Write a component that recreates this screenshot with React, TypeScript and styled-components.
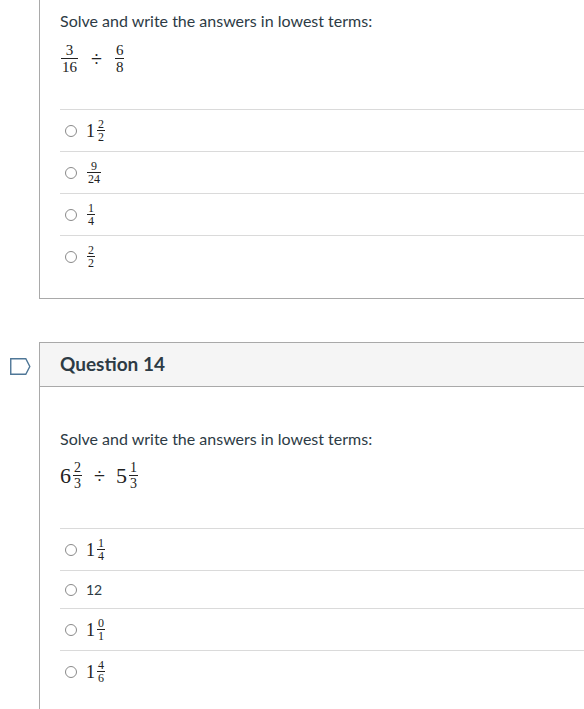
import React from "react";
import styled, { createGlobalStyle } from "styled-components";

const GlobalStyle = createGlobalStyle`
  html, body {
    margin: 0;
    padding: 0;
    background: #fff;
    overflow: hidden;
  }
  body {
    font-family: Lato, "Open Sans", sans-serif;
    color: #2d3b45;
  }
`;

const MATH_FONT = `"Liberation Serif", "DejaVu Serif", "Times New Roman", serif`;

const Page = styled.div`
  display: flex;
  flex-direction: column;
  gap: 43px;
  width: 584px;
`;

const QuestionRow = styled.div`
  display: flex;
  align-items: flex-start;
`;

const Gutter = styled.div`
  width: 39px;
  flex-shrink: 0;
  box-sizing: border-box;
  padding: 16px 0 0 10px;
`;

const Card = styled.section<{ $cut?: boolean }>`
  flex: 1;
  min-width: 0;
  border: 1px solid #a9a9a9;
  border-right: none;
  border-top: ${(p) => (p.$cut ? "none" : "1px solid #a9a9a9")};
`;

const Header = styled.header`
  height: 44px;
  box-sizing: border-box;
  display: flex;
  align-items: center;
  padding: 0 0 3px 20px;
  background: #f5f5f5;
  border-bottom: 1px solid #a9a9a9;
`;

const Title = styled.h2`
  margin: 0;
  font-size: 19px;
  font-weight: 700;
  color: #2d3b45;
`;

const Body = styled.div<{ $top: number }>`
  padding: ${(p) => p.$top}px 0 21px 20px;
`;

const Prompt = styled.p`
  margin: 0;
  font-size: 16px;
  line-height: 24px;
`;

const MathRow = styled.div<{ $gap: number; $top: number }>`
  display: flex;
  align-items: center;
  gap: ${(p) => p.$gap}px;
  margin-top: ${(p) => p.$top}px;
  font-family: ${MATH_FONT};
  color: #222;
`;

const Whole = styled.span<{ $size: number }>`
  font-family: ${MATH_FONT};
  font-size: ${(p) => p.$size}px;
  line-height: 1;
`;

const Mixed = styled.span`
  display: inline-flex;
  align-items: center;
  gap: 1px;
`;

const Frac = styled.span<{ $size: number; $lead?: number }>`
  display: inline-flex;
  flex-direction: column;
  align-items: center;
  font-family: ${MATH_FONT};
  font-size: ${(p) => p.$size}px;
  line-height: ${(p) => p.$size - (p.$lead ?? 1)}px;
  padding: 0 1px;
`;

const Num = styled.span`
  padding: 0 1px 1px;
`;

const Den = styled.span`
  align-self: stretch;
  text-align: center;
  border-top: 1px solid currentColor;
  padding: 1px 1px 0;
`;

const Divide = styled.span`
  font-family: ${MATH_FONT};
  font-size: 20px;
  line-height: 1;
`;

const Answers = styled.ul<{ $top: number }>`
  list-style: none;
  margin: ${(p) => p.$top}px 0 0;
  padding: 0;
`;

const Answer = styled.li`
  display: flex;
  align-items: center;
  gap: 9px;
  padding: 9px 0;
  border-top: 1px solid #dadada;
  font-family: ${MATH_FONT};
  color: #222;
`;

const Radio = styled.span`
  width: 12px;
  height: 12px;
  margin-left: 5px;
  box-sizing: border-box;
  border: 1px solid #8a8a8a;
  border-radius: 50%;
  background: #fff;
  flex-shrink: 0;
`;

const PlainText = styled.span`
  font-family: Lato, "Open Sans", sans-serif;
  font-size: 14px;
  line-height: 19px;
  color: #2d3b45;
`;

const Flag = () => (
  <svg width="22" height="18" viewBox="0 0 22 18" fill="none">
    <path
      d="M0.75 0.75 H15.8 L19.8 8.5 L15.8 16.25 H0.75 Z"
      stroke="#4f7797"
      strokeWidth="1.4"
      strokeLinejoin="miter"
    />
  </svg>
);

type Value = { whole?: string; num?: string; den?: string; text?: string };

const AnswerValue = ({ v }: { v: Value }) => {
  if (v.text) return <PlainText>{v.text}</PlainText>;
  const frac = v.num ? (
    <Frac $size={12} $lead={2}>
      <Num>{v.num}</Num>
      <Den>{v.den}</Den>
    </Frac>
  ) : null;
  if (v.whole)
    return (
      <Mixed>
        <Whole $size={18}>{v.whole}</Whole>
        {frac}
      </Mixed>
    );
  return frac;
};

const firstAnswers: Value[] = [
  { whole: "1", num: "2", den: "2" },
  { num: "9", den: "24" },
  { num: "1", den: "4" },
  { num: "2", den: "2" },
];

const secondAnswers: Value[] = [
  { whole: "1", num: "1", den: "4" },
  { text: "12" },
  { whole: "1", num: "0", den: "1" },
  { whole: "1", num: "4", den: "6" },
];

export default function App() {
  return (
    <>
      <GlobalStyle />
      <Page>
        <QuestionRow>
          <Gutter />
          <Card $cut>
            <Body $top={9}>
              <Prompt>Solve and write the answers in lowest terms:</Prompt>
              <MathRow $gap={12} $top={10}>
                <Frac $size={15}>
                  <Num>3</Num>
                  <Den>16</Den>
                </Frac>
                <Divide>÷</Divide>
                <Frac $size={15}>
                  <Num>6</Num>
                  <Den>8</Den>
                </Frac>
              </MathRow>
              <Answers $top={35}>
                {firstAnswers.map((a, i) => (
                  <Answer key={i}>
                    <Radio />
                    <AnswerValue v={a} />
                  </Answer>
                ))}
              </Answers>
            </Body>
          </Card>
        </QuestionRow>

        <QuestionRow>
          <Gutter>
            <Flag />
          </Gutter>
          <Card>
            <Header>
              <Title>Question 14</Title>
            </Header>
            <Body $top={40}>
              <Prompt>Solve and write the answers in lowest terms:</Prompt>
              <MathRow $gap={11} $top={10}>
                <Mixed>
                  <Whole $size={22}>6</Whole>
                  <Frac $size={14}>
                    <Num>2</Num>
                    <Den>3</Den>
                  </Frac>
                </Mixed>
                <Divide>÷</Divide>
                <Mixed>
                  <Whole $size={22}>5</Whole>
                  <Frac $size={14}>
                    <Num>1</Num>
                    <Den>3</Den>
                  </Frac>
                </Mixed>
              </MathRow>
              <Answers $top={38}>
                {secondAnswers.map((a, i) => (
                  <Answer key={i}>
                    <Radio />
                    <AnswerValue v={a} />
                  </Answer>
                ))}
              </Answers>
            </Body>
          </Card>
        </QuestionRow>
      </Page>
    </>
  );
}
